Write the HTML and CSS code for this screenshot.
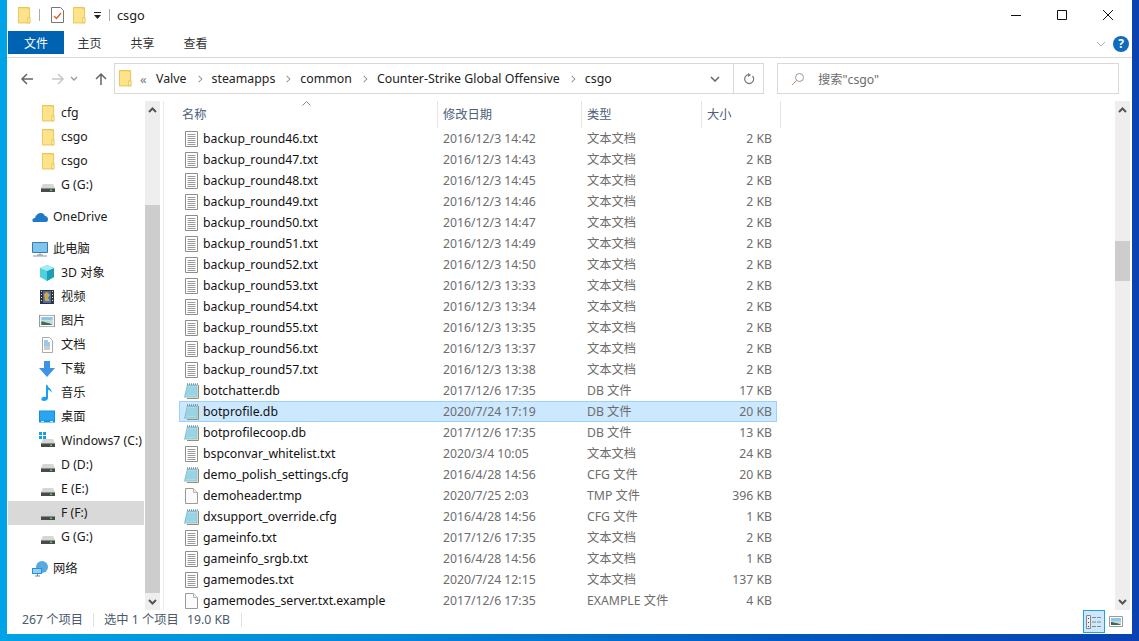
FILE: index.html
```html
<!DOCTYPE html>
<html lang="zh">
<head>
<meta charset="utf-8">
<title>csgo</title>
<link rel="stylesheet" href="styles.css">
</head>
<body>
<svg class="defs" width="0" height="0">
  <symbol id="folder" viewBox="0 0 14 18"><path d="M.5.5h9l3 2v14.500H.5z" fill="#ffe38a" stroke="#e8c24e"/><path d="M.5 .5h12v2" fill="none" stroke="#e8c24e"/><path d="M10.500 11.500h2.500v5.500h-2.500z" fill="#fff3c4" stroke="#e8c24e"/></symbol>
  <symbol id="txt" viewBox="0 0 15 16"><path d="M1.500.500h12v15h-12z" fill="#fff" stroke="#8d8d8d"/><path d="M3.500 3.500h8M3.500 5.500h8M3.500 7.500h8M3.500 9.500h8M3.500 11.500h8M3.500 13.500h8" stroke="#9a9a9a"/></symbol>
  <symbol id="blank" viewBox="0 0 15 16"><path d="M1.500.500h8l4 4v11h-12z" fill="#fbfbfb" stroke="#9a9a9a"/><path d="M9.500.500v4h4" fill="#eee" stroke="#b5b5b5"/></symbol>
  <symbol id="note" viewBox="0 0 15 16"><path d="M14.500 2v13.500H3" fill="none" stroke="#a08c60"/><path d="M3 1.500h10.500v13H0z" fill="#7fc0d6"/><path d="M3.500 3h9v10.500H1.500z" fill="#a9dbe8"/><path d="M3 5h9.500M2.700 7h9.800M2.400 9h10.100M2 11h10.500" stroke="#8fcbdc"/><path d="M3 1h11" stroke="#555" stroke-dasharray="1 1"/></symbol>
  <symbol id="drive" viewBox="0 0 14 8"><path d="M2 0h10l2 4H0z" fill="#d6d6d6"/><path d="M0 4h14v4H0z" fill="#4a4a4a"/><path d="M0 4h14v1H0z" fill="#8a8a8a"/><path d="M9 5.500h2v1.500H9z" fill="#45d65a"/></symbol>
  <symbol id="thumbpic" viewBox="0 0 14 11"><path d="M.5.500h13v10H.500z" fill="#fff" stroke="#9a9a9a"/><path d="M2 2h10v3H2z" fill="#8ec4ea"/><path d="M2 5h10v4H2z" fill="#c4d8dc"/><path d="M2 6c3 0 3 1 5 1s3 1 5 2H2z" fill="#3e6a58"/></symbol>
</svg>
<div class="desktop">
  <div class="window">
    <header class="titlebar">
      <svg class="qa-folder"><use href="#folder"/></svg>
      <span class="qa-sep"></span>
      <svg class="qa-doc" viewBox="0 0 13 16"><path d="M.5.500h9l3 3v12H.500z" fill="#fff" stroke="#777"/><path d="M3 9l2.500 2.500L10 6" fill="none" stroke="#e2562a" stroke-width="1.300"/></svg>
      <svg class="qa-folder2"><use href="#folder"/></svg>
      <svg class="qa-drop" viewBox="0 0 7 7"><path d="M0 0h7v1H0zM0 3h7L3.500 7z" fill="#222"/></svg>
      <span class="qa-sep qa-sep2"></span>
      <span class="title">csgo</span>
      <div class="caption">
        <svg class="cap" viewBox="0 0 46 30"><path d="M18 15.500h10" stroke="#111"/></svg>
        <svg class="cap" viewBox="0 0 46 30"><path d="M18.500 10.500h9v9h-9z" fill="none" stroke="#111"/></svg>
        <svg class="cap" viewBox="0 0 46 30"><path d="M18 10l10 10M28 10L18 20" fill="none" stroke="#111"/></svg>
      </div>
    </header>
    <nav class="ribbon">
      <span class="tab tab-file">文件</span>
      <span class="tab">主页</span>
      <span class="tab">共享</span>
      <span class="tab">查看</span>
      <svg class="rib-chev" viewBox="0 0 10 6"><path d="M1 1l4 4 4-4" fill="none" stroke="#b0b0b0"/></svg>
      <span class="help">?</span>
    </nav>
    <div class="addressrow">
      <div class="navbtns">
        <svg class="nav-ico" viewBox="0 0 14 14"><path d="M13 7H2M7 2L2 7l5 5" fill="none" stroke="#666" stroke-width="1.500"/></svg>
        <svg class="nav-ico nav-next" viewBox="0 0 14 14"><path d="M1 7h11M7 2l5 5-5 5" fill="none" stroke="#c8c8c8" stroke-width="1.500"/></svg>
        <svg class="nav-small" viewBox="0 0 8 6"><path d="M1 1l3 3 3-3" fill="none" stroke="#999" stroke-width="1.300"/></svg>
        <svg class="nav-ico nav-up" viewBox="0 0 14 14"><path d="M7 13V2M2 7l5-5 5 5" fill="none" stroke="#666" stroke-width="1.500"/></svg>
      </div>
      <div class="address">
        <svg class="addr-folder"><use href="#folder"/></svg>
        <span class="crumb-more">«</span>
        <span class="crumb">Valve</span><i class="chev"></i>
        <span class="crumb">steamapps</span><i class="chev"></i>
        <span class="crumb">common</span><i class="chev"></i>
        <span class="crumb">Counter-Strike Global Offensive</span><i class="chev"></i>
        <span class="crumb">csgo</span>
        <svg class="addr-drop" viewBox="0 0 10 6"><path d="M1 1l4 4 4-4" fill="none" stroke="#666" stroke-width="1.500"/></svg>
        <span class="addr-refresh"><svg class="refresh" viewBox="0 0 12 12"><path d="M9.500 3A4.500 4.500 0 1 1 6 1.500" fill="none" stroke="#777" stroke-width="1.200"/><path d="M5 0v4l3-2z" fill="#777"/></svg></span>
      </div>
      <div class="search">
        <svg class="search-ico" viewBox="0 0 14 14"><circle cx="8.500" cy="5.500" r="4" fill="none" stroke="#999"/><path d="M5.500 8.500L1 13" stroke="#c08a60"/></svg>
        <span>搜索"csgo"</span>
      </div>
    </div>
    <div class="content">
      <aside class="sidebar">
        <ul class="tree">
          <li class="node"><svg class="ico-folder"><use href="#folder"/></svg>cfg</li>
          <li class="node"><svg class="ico-folder"><use href="#folder"/></svg>csgo</li>
          <li class="node"><svg class="ico-folder"><use href="#folder"/></svg>csgo</li>
          <li class="node"><svg class="ico-drive"><use href="#drive"/></svg>G (G:)</li>
          <li class="node root group">
            <svg class="ico-root" viewBox="0 0 16 11"><path d="M1 10.500c-1.500-2 0-4 2-4 .5-3 3-5 6-5 2 0 3.500 1.500 4 3 2 0 3 2 3 3.500 0 1.500-1 2.500-2 2.500z" fill="#1f78c8"/></svg>OneDrive
          </li>
          <li class="node root group">
            <svg class="ico-root ico-pc" viewBox="0 0 16 16"><path d="M.5 1.500h15v10H.5z" fill="#7fc4ee" stroke="#3a7ca8"/><path d="M5 14h6M8 12v2M1 15h14" stroke="#8a9aa8"/></svg>此电脑
          </li>
          <li class="node"><svg class="ico-lib" viewBox="0 0 16 16"><path d="M8 0l7 3v9l-7 4-7-4V3z" fill="#4fd0de"/><path d="M8 6v10l7-4V3z" fill="#1a9fb4"/><path d="M1 3l7 3 7-3-7-3z" fill="#a8ecf2"/></svg>3D 对象</li>
          <li class="node"><svg class="ico-lib" viewBox="0 0 16 16"><path d="M1 1h14v14H1z" fill="#333"/><path d="M4 2h8v12H4z" fill="#3f6fc0"/><path d="M5 5l3-2 3 3-2 3 2 3H6z" fill="#d4a83a"/><path d="M2 2h1v1H2zM2 5h1v1H2zM2 8h1v1H2zM2 11h1v1H2zM13 2h1v1h-1zM13 5h1v1h-1zM13 8h1v1h-1zM13 11h1v1h-1z" fill="#ddd"/></svg>视频</li>
          <li class="node"><svg class="ico-lib" viewBox="0 0 14 11"><use href="#thumbpic"/></svg>图片</li>
          <li class="node"><svg class="ico-lib" viewBox="0 0 16 16"><path d="M3.500.500h7l3 3v12h-10z" fill="#fff" stroke="#aaa"/><path d="M5 4h4M5 6h6M5 8h6" stroke="#3f92d8"/><path d="M5 10h6M5 12h6" stroke="#999"/></svg>文档</li>
          <li class="node"><svg class="ico-lib" viewBox="0 0 16 16"><path d="M5 0h6v7h5l-8 9-8-9h5z" fill="#3d94e4"/></svg>下载</li>
          <li class="node"><svg class="ico-lib" viewBox="0 0 16 16"><path d="M7 0h1.500c0 3 5 3.500 4 8-.5-2-2-3-3.500-3.200V13c0 2-2 3-4 3s-3-1-2.500-2.500C3 12 5 11.500 7 12z" fill="#1aa0ee"/></svg>音乐</li>
          <li class="node"><svg class="ico-lib" viewBox="0 0 16 13"><path d="M0 0h16v12H0z" fill="#0f8fe6"/><path d="M1 1h14v9H1z" fill="#2aa6f0"/><path d="M2 11h3M11 11h3" stroke="#cdeafc"/></svg>桌面</li>
          <li class="node"><svg class="ico-win" viewBox="0 0 16 16"><path d="M0 0h3v3H0zM4 0h3v3H4zM0 4h3v3H0zM4 4h3v3H4z" fill="#14a0e8"/><use href="#drive" x="2" y="7" width="14" height="8"/></svg>Windows7 (C:)</li>
          <li class="node"><svg class="ico-drive"><use href="#drive"/></svg>D (D:)</li>
          <li class="node"><svg class="ico-drive"><use href="#drive"/></svg>E (E:)</li>
          <li class="node active"><svg class="ico-drive"><use href="#drive"/></svg>F (F:)</li>
          <li class="node"><svg class="ico-drive"><use href="#drive"/></svg>G (G:)</li>
          <li class="node root group">
            <svg class="ico-root ico-net" viewBox="0 0 16 16"><circle cx="10" cy="6" r="6" fill="#5aa8e0"/><path d="M0 7h10v6H0z" fill="#2c8ed8"/><path d="M1 8h8v4H1z" fill="#8fd0f4"/><path d="M3 15h5M5.500 13v2" stroke="#7a8a98"/></svg>网络
          </li>
        </ul>
      </aside>
      <div class="scrollbar side-scroll">
        <span class="sb-btn"><svg class="sb-arrow" viewBox="0 0 9 6"><path d="M1 5l3.500-3.500L8 5" fill="none" stroke="#555" stroke-width="2"/></svg></span>
        <span class="sb-gap side-gap"></span>
        <span class="sb-thumb side-thumb"></span>
        <span class="sb-btn"><svg class="sb-arrow" viewBox="0 0 9 6"><path d="M1 1l3.500 3.500L8 1" fill="none" stroke="#555" stroke-width="2"/></svg></span>
      </div>
      <main class="files">
        <div class="head">
          <svg class="sort" viewBox="0 0 9 5"><path d="M.5 4.500l4-4 4 4" fill="none" stroke="#888"/></svg>
          <span class="hcell h-name">名称</span>
          <span class="hcell h-date">修改日期</span>
          <span class="hcell h-type">类型</span>
          <span class="hcell h-size">大小</span>
        </div>
        <div class="rows">
          <div class="row"><svg class="fi"><use href="#txt"/></svg><span class="name">backup_round46.txt</span><span class="date">2016/12/3 14:42</span><span class="type">文本文档</span><span class="size">2 KB</span></div>
          <div class="row"><svg class="fi"><use href="#txt"/></svg><span class="name">backup_round47.txt</span><span class="date">2016/12/3 14:43</span><span class="type">文本文档</span><span class="size">2 KB</span></div>
          <div class="row"><svg class="fi"><use href="#txt"/></svg><span class="name">backup_round48.txt</span><span class="date">2016/12/3 14:45</span><span class="type">文本文档</span><span class="size">2 KB</span></div>
          <div class="row"><svg class="fi"><use href="#txt"/></svg><span class="name">backup_round49.txt</span><span class="date">2016/12/3 14:46</span><span class="type">文本文档</span><span class="size">2 KB</span></div>
          <div class="row"><svg class="fi"><use href="#txt"/></svg><span class="name">backup_round50.txt</span><span class="date">2016/12/3 14:47</span><span class="type">文本文档</span><span class="size">2 KB</span></div>
          <div class="row"><svg class="fi"><use href="#txt"/></svg><span class="name">backup_round51.txt</span><span class="date">2016/12/3 14:49</span><span class="type">文本文档</span><span class="size">2 KB</span></div>
          <div class="row"><svg class="fi"><use href="#txt"/></svg><span class="name">backup_round52.txt</span><span class="date">2016/12/3 14:50</span><span class="type">文本文档</span><span class="size">2 KB</span></div>
          <div class="row"><svg class="fi"><use href="#txt"/></svg><span class="name">backup_round53.txt</span><span class="date">2016/12/3 13:33</span><span class="type">文本文档</span><span class="size">2 KB</span></div>
          <div class="row"><svg class="fi"><use href="#txt"/></svg><span class="name">backup_round54.txt</span><span class="date">2016/12/3 13:34</span><span class="type">文本文档</span><span class="size">2 KB</span></div>
          <div class="row"><svg class="fi"><use href="#txt"/></svg><span class="name">backup_round55.txt</span><span class="date">2016/12/3 13:35</span><span class="type">文本文档</span><span class="size">2 KB</span></div>
          <div class="row"><svg class="fi"><use href="#txt"/></svg><span class="name">backup_round56.txt</span><span class="date">2016/12/3 13:37</span><span class="type">文本文档</span><span class="size">2 KB</span></div>
          <div class="row"><svg class="fi"><use href="#txt"/></svg><span class="name">backup_round57.txt</span><span class="date">2016/12/3 13:38</span><span class="type">文本文档</span><span class="size">2 KB</span></div>
          <div class="row"><svg class="fi"><use href="#note"/></svg><span class="name">botchatter.db</span><span class="date">2017/12/6 17:35</span><span class="type">DB 文件</span><span class="size">17 KB</span></div>
          <div class="row selected"><svg class="fi"><use href="#note"/></svg><span class="name">botprofile.db</span><span class="date">2020/7/24 17:19</span><span class="type">DB 文件</span><span class="size">20 KB</span></div>
          <div class="row"><svg class="fi"><use href="#note"/></svg><span class="name">botprofilecoop.db</span><span class="date">2017/12/6 17:35</span><span class="type">DB 文件</span><span class="size">13 KB</span></div>
          <div class="row"><svg class="fi"><use href="#txt"/></svg><span class="name">bspconvar_whitelist.txt</span><span class="date">2020/3/4 10:05</span><span class="type">文本文档</span><span class="size">24 KB</span></div>
          <div class="row"><svg class="fi"><use href="#note"/></svg><span class="name">demo_polish_settings.cfg</span><span class="date">2016/4/28 14:56</span><span class="type">CFG 文件</span><span class="size">20 KB</span></div>
          <div class="row"><svg class="fi"><use href="#blank"/></svg><span class="name">demoheader.tmp</span><span class="date">2020/7/25 2:03</span><span class="type">TMP 文件</span><span class="size">396 KB</span></div>
          <div class="row"><svg class="fi"><use href="#note"/></svg><span class="name">dxsupport_override.cfg</span><span class="date">2016/4/28 14:56</span><span class="type">CFG 文件</span><span class="size">1 KB</span></div>
          <div class="row"><svg class="fi"><use href="#txt"/></svg><span class="name">gameinfo.txt</span><span class="date">2017/12/6 17:35</span><span class="type">文本文档</span><span class="size">2 KB</span></div>
          <div class="row"><svg class="fi"><use href="#txt"/></svg><span class="name">gameinfo_srgb.txt</span><span class="date">2016/4/28 14:56</span><span class="type">文本文档</span><span class="size">1 KB</span></div>
          <div class="row"><svg class="fi"><use href="#txt"/></svg><span class="name">gamemodes.txt</span><span class="date">2020/7/24 12:15</span><span class="type">文本文档</span><span class="size">137 KB</span></div>
          <div class="row"><svg class="fi"><use href="#blank"/></svg><span class="name">gamemodes_server.txt.example</span><span class="date">2017/12/6 17:35</span><span class="type">EXAMPLE 文件</span><span class="size">4 KB</span></div>
        </div>
      </main>
      <div class="scrollbar main-scroll">
        <span class="sb-btn"><svg class="sb-arrow" viewBox="0 0 9 6"><path d="M1 5l3.500-3.500L8 5" fill="none" stroke="#555" stroke-width="2"/></svg></span>
        <span class="sb-gap main-gap"></span>
        <span class="sb-thumb main-thumb"></span>
        <span class="sb-gap"></span>
        <span class="sb-btn"><svg class="sb-arrow" viewBox="0 0 9 6"><path d="M1 1l3.500 3.500L8 1" fill="none" stroke="#555" stroke-width="2"/></svg></span>
      </div>
    </div>
    <footer class="status">
      <span class="st-count">267 个项目</span>
      <span class="st-sep"></span>
      <span class="st-sel">选中 1 个项目</span>
      <span class="st-size">19.0 KB</span>
      <span class="st-sep"></span>
      <div class="views">
        <span class="view-list"><svg class="view-ico" viewBox="0 0 16 14"><path d="M.5.500h4v13h-4z" fill="#eee" stroke="#888"/><path d="M2 3h1v1H2zM2 7h1v1H2zM2 11h1v1H2z" fill="#444"/><path d="M6 2.500h4M11 2.500h4M6 7h4M11 7h4M6 11.500h4M11 11.500h4" stroke="#888"/></svg></span>
        <svg class="view-thumb"><use href="#thumbpic"/></svg>
      </div>
    </footer>
  </div>
</div>
</body>
</html>
```
FILE: styles.css
```css
* { box-sizing: border-box; margin: 0; padding: 0; }
html, body { width: 1139px; height: 641px; overflow: hidden; }
body { font-family: "Noto Sans", "Noto Sans CJK SC", sans-serif; font-size: 12.250px; color: #1a1a1a; }
.defs { position: absolute; }
svg { display: block; flex: none; }
.desktop { width: 1139px; height: 641px; padding: 0 7px 7px; background: linear-gradient(90deg, #00a3e6 0%, #0086d8 35%, #0058c0 70%, #0a42b2 100%); }
.window { width: 100%; height: 100%; background: #fff; display: flex; flex-direction: column; }

.titlebar { height: 30px; display: flex; align-items: center; flex: none; }
.qa-folder { width: 13px; height: 17px; margin-left: 11px; }
.qa-sep { width: 1px; height: 12px; background: #aaa; margin-left: 8px; }
.qa-doc { width: 13px; height: 16px; margin-left: 11px; }
.qa-folder2 { width: 13px; height: 17px; margin-left: 9px; }
.qa-drop { width: 7px; height: 7px; margin-left: 8px; }
.qa-sep2 { margin-left: 8px; }
.title { margin-left: 7px; font-size: 12.750px; color: #222; }
.caption { margin-left: auto; margin-right: 1px; display: flex; }
.cap { width: 46px; height: 30px; }

.ribbon { height: 28px; flex: none; display: flex; align-items: flex-start; padding-left: 1px; border-bottom: 1px solid #d9d9d9; position: relative; }
.tab { height: 23px; line-height: 25px; margin-top: 1px; width: 53px; text-align: center; color: #333; font-size: 12px; }
.tab-file { width: 56px; background: #0063b1; color: #fff; margin-right: -1px; }
.rib-chev { width: 10px; height: 6px; margin-left: auto; margin-top: 11px; }
.help { width: 16px; height: 16px; border-radius: 50%; background: #0f6cbd; color: #fff; font-weight: 700; font-size: 12px; line-height: 16px; text-align: center; margin: 6px 3px 0 7px; }

.addressrow { height: 43px; flex: none; display: flex; align-items: flex-start; padding-top: 5px; }
.navbtns { width: 107px; height: 31px; display: flex; align-items: center; flex: none; }
.nav-ico { width: 14px; height: 14px; }
.navbtns .nav-ico:first-child { margin-left: 13px; }
.nav-next { margin-left: 17px; }
.nav-small { width: 8px; height: 6px; margin-left: 5px; }
.nav-up { margin-left: 16px; }
.address { width: 650px; height: 31px; border: 1px solid #d9d9d9; display: flex; align-items: center; flex: none; color: #222; }
.addr-folder { width: 13px; height: 17px; margin-left: 4px; }
.crumb-more { margin-left: 8px; color: #777; font-size: 13px; width: 16px; }
.crumb { font-size: 12.350px; }
.chev { width: 6px; height: 6px; border-top: 1.500px solid #888; border-right: 1.500px solid #888; transform: rotate(45deg) scale(.8); margin: 0 10px 0 9px; flex: none; }
.addr-drop { width: 10px; height: 6px; margin-left: auto; margin-right: 13px; }
.addr-refresh { width: 30px; height: 29px; border-left: 1px solid #d9d9d9; display: flex; align-items: center; justify-content: center; flex: none; }
.refresh { width: 12px; height: 12px; }
.search { width: 342px; height: 31px; margin-left: 13px; border: 1px solid #d9d9d9; display: flex; align-items: center; color: #6d6d6d; flex: none; }
.search-ico { width: 14px; height: 14px; margin: 0 13px 0 13px; }

.content { flex: 1; min-height: 0; display: flex; overflow: hidden; }
.sidebar { width: 138px; flex: none; overflow: hidden; padding-left: 1px; }
.tree { list-style: none; }
.node { height: 24px; display: flex; align-items: center; padding: 0 0 2px 53px; margin-right: 1px; color: #1a1a1a; position: relative; white-space: nowrap; }
.node.root { padding-left: 45px; }
.node.group { margin-top: 8px; }
.node.active { background: #d9d9d9; }
.ico-folder { width: 13px; height: 17px; position: absolute; left: 34px; top: 4px; }
.ico-drive { width: 14px; height: 8px; position: absolute; left: 33px; top: 11px; }
.ico-win { width: 16px; height: 16px; position: absolute; left: 31px; top: 3px; }
.ico-lib { width: 16px; height: 16px; position: absolute; left: 31px; top: 4px; }
.ico-root { width: 16px; height: 16px; position: absolute; left: 24px; top: 4px; }

.scrollbar { width: 15px; flex: none; background: #eee; display: flex; flex-direction: column; }
.sb-btn { height: 17px; display: flex; align-items: center; justify-content: center; flex: none; }
.sb-arrow { width: 9px; height: 6px; }
.sb-gap { flex: 1; }
.sb-thumb { flex: none; background: #cdcdcd; }
.side-gap { flex: 0 0 87px; }
.side-thumb { flex: 1; }
.main-gap { flex: 0 0 123px; }
.main-thumb { height: 40px; }

.files { flex: 1; min-width: 0; margin: 0 0 0 3px; border-left: 1px solid #eaeaea; overflow: hidden; display: flex; flex-direction: column; position: relative; }
.head { height: 27px; flex: none; display: flex; position: relative; color: #4c607a; }
.sort { width: 9px; height: 5px; position: absolute; left: 138px; top: 0; }
.hcell { display: flex; align-items: center; padding: 0 0 1px 5px; height: 27px; border-right: 1px solid #e5e5e5; }
.h-name { width: 274px; padding-left: 18px; }
.h-date { width: 144px; }
.h-type { width: 120px; }
.h-size { width: 79px; }
.rows { flex: 1; overflow: hidden; padding-left: 15px; }
.row { width: 598px; height: 21px; display: flex; align-items: center; border: 1px solid transparent; color: #6d6d6d; position: relative; white-space: nowrap; }
.row.selected { background: #cce8ff; border-color: #99d1ff; }
.fi { width: 15px; height: 16px; margin-left: 4px; flex: none; }
.name { width: 240px; margin-left: 4px; color: #111; flex: none; }
.date { width: 144px; flex: none; }
.type { width: 114px; flex: none; padding-bottom: 2px; }
.size { width: 71px; text-align: right; flex: none; }
.main-scroll { margin-right: 2px; }

.status { height: 24px; flex: none; display: flex; align-items: flex-start; color: #4a5a6a; line-height: 20px; }
.st-count { margin-left: 15px; width: 71px; }
.st-sep { width: 1px; height: 14px; background: #e0e0e0; margin-top: 3px; }
.st-sel { margin-left: 10px; width: 83px; }
.st-size { width: 54px; }
.views { margin-left: auto; display: flex; align-items: center; margin-right: 9px; }
.view-list { width: 22px; height: 23px; background: #cce8ff; border: 1px solid #26a0da; display: flex; align-items: center; justify-content: center; }
.view-ico { width: 16px; height: 14px; }
.view-thumb { width: 14px; height: 11px; margin-left: 4px; }
```
